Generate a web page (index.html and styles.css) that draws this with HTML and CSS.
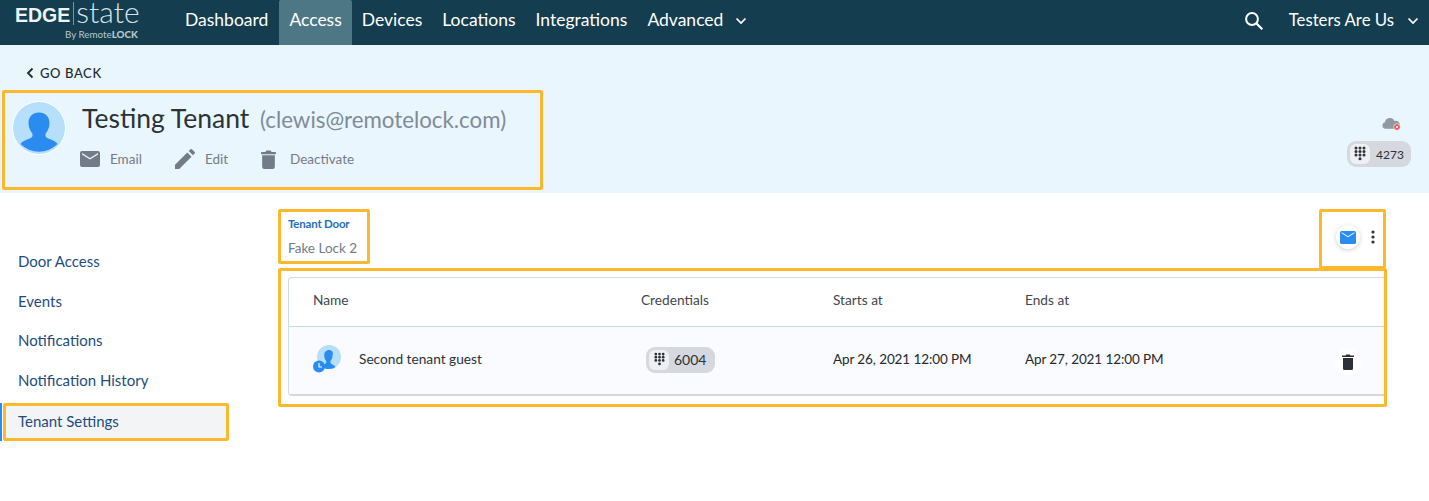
FILE: index.html
```html
<!DOCTYPE html>
<html lang="en">
<head>
<meta charset="utf-8">
<title>Testing Tenant</title>
<link rel="stylesheet" href="styles.css">
</head>
<body>
<header class="topbar">
  <div class="logo">
    <div class="logo-main"><span class="logo-edge">EDGE</span><span class="logo-bar"></span><span class="logo-state">state</span></div>
    <div class="logo-sub">By Remote<b>LOCK</b></div>
  </div>
  <nav class="nav">
    <a class="nav-item nav-first">Dashboard</a>
    <a class="nav-item active">Access</a>
    <a class="nav-item">Devices</a>
    <a class="nav-item">Locations</a>
    <a class="nav-item">Integrations</a>
    <a class="nav-item">Advanced
      <svg class="chev" viewBox="0 0 12 8" width="12" height="8"><path d="M1.5 1.5 6 6l4.5-4.5" fill="none" stroke="#fff" stroke-width="1.7"/></svg>
    </a>
  </nav>
  <div class="top-right">
    <svg class="search" viewBox="0 0 20 20" width="20" height="20"><circle cx="8" cy="8" r="5.9" fill="none" stroke="#fff" stroke-width="2"/><path d="m12.3 12.3 6 6" stroke="#fff" stroke-width="2.2" fill="none"/></svg>
    <span class="account">Testers Are Us</span>
    <svg class="chev" viewBox="0 0 12 8" width="12" height="8"><path d="M1.5 1.5 6 6l4.5-4.5" fill="none" stroke="#fff" stroke-width="1.7"/></svg>
  </div>
</header>

<section class="band">
  <div class="band-left">
    <a class="back"><svg viewBox="0 0 8 12" width="8" height="12"><path d="M6.5 1.5 2 6l4.5 4.5" fill="none" stroke="#23292f" stroke-width="1.8"/></svg>GO BACK</a>
    <div class="hero mark">
      <svg class="avatar" viewBox="0 0 54 54" width="54" height="54">
        <circle cx="27" cy="27" r="26.5" fill="#b5dffb" stroke="#fff" stroke-width="1"/>
        <path d="M27 11.500c-6.500 0-10.500 4.500-10.500 10.500 0 4 1.500 7.500 3.500 10 .8 1 .8 3.500-.5 4.500-2 1.500-9 3-11 6.500a26 26 0 0 0 37 0c-2-3.500-9-5-11-6.500-1.300-1-1.300-3.500-.5-4.500 2-2.500 3.500-6 3.500-10 0-6-4-10.500-10.500-10.500z" fill="#2b8cef"/>
      </svg>
      <div class="hero-body">
        <h1 class="title">Testing Tenant <span class="title-mail">(clewis@remotelock.com)</span></h1>
        <div class="actions">
          <a class="action action-email"><svg viewBox="0 0 20 16" width="20" height="16"><path d="M2 0h16a2 2 0 0 1 2 2v12a2 2 0 0 1-2 2H2a2 2 0 0 1-2-2V2a2 2 0 0 1 2-2zm0 3.500 8 5 8-5V2l-8 5-8-5z" fill="#747b88" fill-rule="evenodd"/></svg>Email</a>
          <a class="action action-edit"><svg viewBox="0 0 20 20" width="20" height="20"><path d="M0 20v-4.200L12.300 3.500l4.200 4.200L4.200 20zM13.700 2.100 15.500.3a1 1 0 0 1 1.400 0l2.800 2.800a1 1 0 0 1 0 1.400l-1.800 1.800z" fill="#747b88"/></svg>Edit</a>
          <a class="action"><svg viewBox="0 0 14 18" width="15" height="19"><path d="M0 2h4l1-1.500h4L10 2h4v2H0zM1 5h12v11a2 2 0 0 1-2 2H3a2 2 0 0 1-2-2z" fill="#747b88"/></svg>Deactivate</a>
        </div>
      </div>
    </div>
  </div>
  <div class="band-right">
    <svg class="cloud" viewBox="0 0 19 13" width="19" height="13">
      <path d="M3.500 10.800A3.300 3.300 0 0 1 3 4.300 5 5 0 0 1 12.500 3a4 4 0 0 1 2.500 7.800z" fill="#8f98a3"/>
      <circle cx="15" cy="9" r="3.300" fill="#ee4d4d" stroke="#e9f6fd" stroke-width=".7"/>
      <path d="m13.700 7.700 2.600 2.600m0-2.600-2.600 2.600" stroke="#fff" stroke-width=".9"/>
    </svg>
    <div class="pill pill-small">
      <span class="pad-icon"><svg viewBox="0 0 12 16" width="12" height="16"><g fill="#2c3238"><circle cx="2" cy="2" r="1.500"/><circle cx="6" cy="2" r="1.500"/><circle cx="10" cy="2" r="1.500"/><circle cx="2" cy="5.500" r="1.500"/><circle cx="6" cy="5.500" r="1.500"/><circle cx="10" cy="5.500" r="1.500"/><circle cx="2" cy="9" r="1.500"/><circle cx="6" cy="9" r="1.500"/><circle cx="10" cy="9" r="1.500"/><circle cx="6" cy="12.800" r="1.500"/></g></svg></span>
      <span>4273</span>
    </div>
  </div>
</section>

<main class="main">
  <aside class="side">
    <a class="side-item">Door Access</a>
    <a class="side-item">Events</a>
    <a class="side-item">Notifications</a>
    <a class="side-item">Notification History</a>
    <a class="side-item current"><span class="side-mark mark">Tenant Settings</span></a>
  </aside>
  <div class="content">
    <div class="content-head">
      <div class="door mark">
        <div class="door-label">Tenant Door</div>
        <div class="door-name">Fake Lock 2</div>
      </div>
      <div class="door-tools mark">
        <span class="mail-btn"><svg viewBox="0 0 16 13" width="16" height="13"><path d="M1.500 0h13A1.500 1.500 0 0 1 16 1.500v10a1.500 1.500 0 0 1-1.500 1.500h-13A1.500 1.500 0 0 1 0 11.500v-10A1.500 1.500 0 0 1 1.500 0zm.2 2.300L8 6.300l6.300-4v-1L8 5.200 1.700 1.300z" fill="#2b8cef" fill-rule="evenodd"/></svg></span>
        <svg class="dots" viewBox="0 0 4 14" width="4" height="14"><g fill="#2c3238"><circle cx="2" cy="2" r="1.600"/><circle cx="2" cy="7" r="1.600"/><circle cx="2" cy="12" r="1.600"/></g></svg>
      </div>
    </div>
    <div class="table-wrap mark">
      <div class="table">
        <div class="row row-head">
          <span class="col-name">Name</span>
          <span class="col-cred">Credentials</span>
          <span class="col-start">Starts at</span>
          <span class="col-end">Ends at</span>
        </div>
        <div class="row row-body">
          <span class="col-name guest">
            <svg class="guest-icon" viewBox="0 0 28 28" width="28" height="28">
              <circle cx="16" cy="12" r="12" fill="#b5dffb"/>
              <path d="M16 5c-3 0-4.800 2.300-4.800 5.200 0 2.300.9 4.200 1.800 5.600.5.800.4 2-.4 2.600-1 .7-2.600 1.200-3.600 2.300.5 1.500 2.500 3.300 7 3.300 3 0 5-.7 6.500-2-1-1.500-3.300-2.700-4.500-3.600-.7-.6-.8-1.800-.3-2.600.9-1.400 1.800-3.300 1.800-5.600C20.800 7.300 19 5 16 5z" fill="#2b8cef"/>
              <circle cx="6" cy="21.500" r="6" fill="#2b8cef"/>
              <path d="M6 18v4h3" fill="none" stroke="#fff" stroke-width="1.100"/>
            </svg>
            Second tenant guest
          </span>
          <span class="col-cred">
            <span class="pill pill-big">
              <span class="pad-icon"><svg viewBox="0 0 12 16" width="11" height="15"><g fill="#2c3238"><circle cx="2" cy="2" r="1.500"/><circle cx="6" cy="2" r="1.500"/><circle cx="10" cy="2" r="1.500"/><circle cx="2" cy="5.500" r="1.500"/><circle cx="6" cy="5.500" r="1.500"/><circle cx="10" cy="5.500" r="1.500"/><circle cx="2" cy="9" r="1.500"/><circle cx="6" cy="9" r="1.500"/><circle cx="10" cy="9" r="1.500"/><circle cx="6" cy="12.800" r="1.500"/></g></svg></span>
              <span>6004</span>
            </span>
          </span>
          <span class="col-start date">Apr 26, 2021 12:00 PM</span>
          <span class="col-end date">Apr 27, 2021 12:00 PM</span>
          <span class="trash-btn"><svg viewBox="0 0 12 16" width="12" height="16"><path d="M0 1.500h3.500L4.300.5h3.400l.8 1H12v1.600H0zM1 4h10v10.500a1.500 1.500 0 0 1-1.500 1.500h-7A1.500 1.500 0 0 1 1 14.500z" fill="#2c3238"/></svg></span>
        </div>
      </div>
    </div>
  </div>
</main>
</body>
</html>
```

FILE: styles.css
```css
* { box-sizing: border-box; }
html, body { margin: 0; padding: 0; }
body {
  font-family: "Lato", "Liberation Sans", sans-serif;
  color: #2c3238;
  background: #fff;
  height: 501px;
  overflow: hidden;
}
a { color: inherit; text-decoration: none; }

.mark { border: 3px solid #fdb92e; border-radius: 2px; }

.topbar {
  height: 45px;
  background: #143d4f;
  color: #fff;
  display: flex;
  align-items: stretch;
  padding-left: 15px;
}
.logo { width: 160px; display: flex; flex-direction: column; padding-top: 1px; }
.logo-main { display: flex; align-items: flex-start; height: 27px; }
.logo-edge { font: 700 19.500px/20px "Liberation Sans", sans-serif; letter-spacing: 0; margin-top: 4px; color: #f0f4f5; }
.logo-bar { width: 1px; height: 23px; background: #a2923f; margin: 1px 2px 0 3px; }
.logo-state { font: 300 30px/20px "Lato", sans-serif; color: #d8e4e8; }
.logo-sub { font-size: 9.800px; color: #b9c8ce; margin-left: 50px; line-height: 12px; white-space: nowrap; }
.logo-sub b { font-weight: 900; }

.nav { display: flex; align-items: stretch; font-size: 17.500px; }
.nav-item { display: flex; align-items: center; padding: 0 10px 6px; white-space: nowrap; }
.nav-first { padding-right: 11px; }
.nav-item.active { background: #4e7786; color: #fff; border-radius: 2px 2px 0 0; }
.nav-item .chev { margin-left: 12px; margin-top: 2px; }
.top-right .chev { margin-left: 13px; margin-top: 2px; }
.top-right {
  margin-left: auto;
  display: flex;
  align-items: center;
  padding: 0 10px 6px 0;
  font-size: 16.800px;
}
.account { margin-left: 25px; }
.search { margin-top: 2px; }

.band {
  height: 148px;
  background: #e9f6fd;
  display: flex;
  justify-content: space-between;
}
.band-left { padding-left: 2px; }
.back {
  display: flex;
  align-items: center;
  gap: 6px;
  height: 45px;
  padding: 10px 0 0 24px;
  font-size: 13px;
  font-weight: 500;
  letter-spacing: .6px;
  color: #23292f;
}
.hero {
  width: 541px;
  height: 100px;
  display: flex;
  padding: 8px 0 0 7px;
}
.avatar { flex: none; }
.hero-body { margin-left: 16px; }
.title {
  margin: -1px 0 0;
  font-size: 26.500px;
  font-weight: 400;
  line-height: 36px;
  color: #2c3238;
  white-space: nowrap;
}
.title-mail { font-size: 22.300px; color: #818a9a; margin-left: 4px; }
.actions { display: flex; align-items: center; margin-top: 10px; margin-left: -2px; font-size: 13.500px; color: #747b88; height: 22px; }
.action { display: flex; align-items: center; gap: 10px; }
.action-email { width: 95px; }
.action-edit { width: 86px; gap: 10px; }
.action-edit + .action { gap: 14px; }

.band-right {
  display: flex;
  flex-direction: column;
  align-items: flex-end;
  padding: 73px 18px 0 0;
}
.cloud { margin-right: 10px; }
.pill {
  display: inline-flex;
  align-items: center;
  background: #d5d8de;
  border-radius: 9px;
  color: #2c3238;
}
.pill-small { height: 26px; width: 64px; margin-top: 10px; padding-left: 3px; font-size: 12px; gap: 6px; }
.pad-icon {
  display: flex;
  align-items: center;
  justify-content: center;
  background: #eef0f3;
  border-radius: 6px;
  width: 20px;
  height: 20px;
}
.pill-big { height: 26px; width: 69px; padding-left: 3px; font-size: 14px; gap: 5px; margin-top: 2px; }

.main { display: flex; }
.side { width: 278px; padding: 48px 0 0 0; flex: none; }
.side-item {
  display: flex;
  align-items: center;
  height: 39.700px;
  padding-left: 18px;
  font-size: 15px;
  color: #1d4d7e;
}
.side-item.current {
  height: 38px;
  margin-top: 3px;
  padding-left: 0;
  width: 229px;
  border-left: 2px solid #2b8cef;
}
.side-mark {
  display: flex;
  align-items: center;
  width: 226px;
  height: 38px;
  padding: 0 0 1px 12px;
  margin-left: 1px;
  background: #f2f4f6;
}
.content { width: 1109px; padding-top: 16px; }
.content-head { display: flex; justify-content: space-between; align-items: flex-start; }
.door { width: 92px; height: 55px; padding: 4px 0 0 7px; }
.door-label { font-size: 11.500px; font-weight: 700; color: #1f6fbd; line-height: 16px; letter-spacing: -.2px; }
.door-name { font-size: 13.500px; color: #747b88; line-height: 18px; margin-top: 7px; white-space: nowrap; }
.door-tools {
  width: 67px;
  height: 60px;
  margin-right: 1px;
  display: flex;
  align-items: center;
  padding: 0 0 4px 14px;
  gap: 11px;
}
.mail-btn {
  width: 24px;
  height: 24px;
  border-radius: 50%;
  background: #fff;
  box-shadow: 0 1px 4px rgba(40, 60, 90, .25);
  display: flex;
  align-items: center;
  justify-content: center;
}
.table-wrap { width: 1109px; height: 139px; margin-top: -1px; padding: 6px 0 0 7px; }
.table {
  width: 1096px;
  height: 119px;
  border: 1px solid #cfdce4;
  border-right: 0;
  border-bottom: 2px solid #d5d8dc;
  border-radius: 4px 0 0 4px;
}
.row { display: flex; align-items: center; }
.row-head { height: 49px; padding-bottom: 5px; border-bottom: 1px solid #c5d9e3; font-size: 13.700px; color: #41474e; }
.row-body { height: 67px; padding-bottom: 4px; background: #f9fbfe; font-size: 13.700px; color: #2c3238; }
.col-name { width: 352px; padding-left: 24px; flex: none; display: flex; align-items: center; }
.col-cred { width: 192px; flex: none; display: flex; }
.col-start { width: 192px; flex: none; }
.col-end { flex: none; width: 310px; }
.row-body .col-start, .row-body .col-end { font-size: 13.500px; }
.date { color: #23292f; letter-spacing: -.1px; }
.guest { gap: 18px; padding-left: 24px; }
.guest-icon { margin-top: 1px; }
.row-body .col-cred { padding-left: 5px; }
.trash-btn {
  width: 26px;
  height: 26px;
  margin-top: 6px;
  border-radius: 50%;
  background: #fff;
  display: flex;
  align-items: center;
  justify-content: center;
  flex: none;
}
```
